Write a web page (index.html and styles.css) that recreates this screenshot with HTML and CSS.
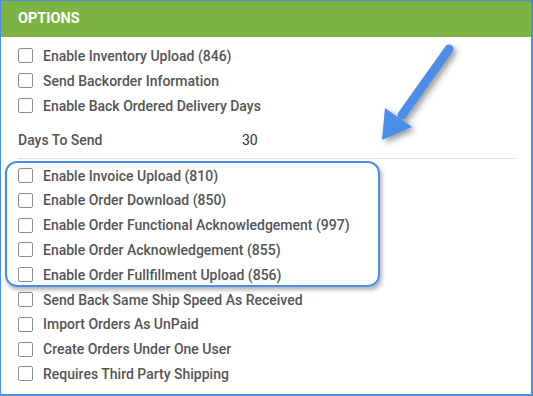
FILE: index.html
```html
<!DOCTYPE html>
<html lang="en">
<head>
    <meta charset="UTF-8">
    <meta name="viewport" content="width=device-width, initial-scale=1.0">
    <title>Options</title>
    <link rel="stylesheet" href="styles.css">
</head>
<body>
    <div class="frame">
        <div class="panel-header">OPTIONS</div>
        <div class="panel-body">
            <label class="option"><span class="box"></span>Enable Inventory Upload (846)</label>
            <label class="option"><span class="box"></span>Send Backorder Information</label>
            <label class="option"><span class="box"></span>Enable Back Ordered Delivery Days</label>

            <div class="field-row">
                <span class="field-label">Days To Send</span>
                <span class="field-value">30</span>
            </div>
            <div class="divider"></div>

            <label class="option"><span class="box"></span>Enable Invoice Upload (810)</label>
            <label class="option"><span class="box"></span>Enable Order Download (850)</label>
            <label class="option"><span class="box"></span>Enable Order Functional Acknowledgement (997)</label>
            <label class="option"><span class="box"></span>Enable Order Acknowledgement (855)</label>
            <label class="option"><span class="box"></span>Enable Order Fullfillment Upload (856)</label>
            <label class="option"><span class="box"></span>Send Back Same Ship Speed As Received</label>
            <label class="option"><span class="box"></span>Import Orders As UnPaid</label>
            <label class="option"><span class="box"></span>Create Orders Under One User</label>
            <label class="option"><span class="box"></span>Requires Third Party Shipping</label>
        </div>

        <!-- annotation overlays -->
        <div class="highlight"></div>
        <svg class="arrow" width="90" height="110" viewBox="0 0 90 110">
            <line x1="79" y1="9" x2="32" y2="75" stroke="#4a8ee8" stroke-width="9" stroke-linecap="round"/>
            <polygon points="15,68 42,87 12,100" fill="#4a8ee8"/>
        </svg>
    </div>
</body>
</html>
```

FILE: styles.css
```css
:root {
    --green: #7cb342;
    --blue: #4a8ee8;
    --text: #555555;
}

body {
    margin: 0;
    padding: 0;
    font-family: Roboto, 'Liberation Sans', sans-serif;
    background: #ffffff;
}

.frame {
    position: relative;
    box-sizing: border-box;
    width: 533px;
    height: 396px;
    border: 2px solid var(--blue);
    border-top-width: 1px;
    border-left-width: 1px;
    background: #ffffff;
    overflow: hidden;
}

.panel-header {
    height: 36px;
    background: var(--green);
    color: #ffffff;
    font-size: 14.5px;
    font-weight: 700;
    line-height: 36px;
    padding-left: 17px;
}

.panel-body {
    padding: 6.6px 16px 0 17px;
}

.option {
    display: flex;
    align-items: center;
    height: 24.8px;
    font-size: 14px;
    font-weight: 500;
    color: var(--text);
}

.box {
    box-sizing: border-box;
    width: 15px;
    height: 15px;
    border: 1.6px solid #8c8c8c;
    border-radius: 2px;
    margin-right: 10px;
    flex-shrink: 0;
}

.field-row {
    display: flex;
    align-items: center;
    height: 24.8px;
    margin-top: 9.2px;
    font-size: 14px;
}

.field-label {
    width: 224px;
    font-weight: 500;
    color: var(--text);
}

.field-value {
    color: #333333;
}

.divider {
    height: 1px;
    background: #e0e0e0;
    margin: 5.6px 0 4.6px 0;
}

.highlight {
    position: absolute;
    left: 4px;
    top: 160px;
    width: 371px;
    height: 122px;
    border: 2.5px solid var(--blue);
    border-radius: 12px;
    box-shadow: 2px 3px 4px rgba(0, 0, 0, 0.3);
}

.arrow {
    position: absolute;
    left: 369px;
    top: 39px;
    filter: drop-shadow(3px 3px 3px rgba(0, 0, 0, 0.4));
}
```
